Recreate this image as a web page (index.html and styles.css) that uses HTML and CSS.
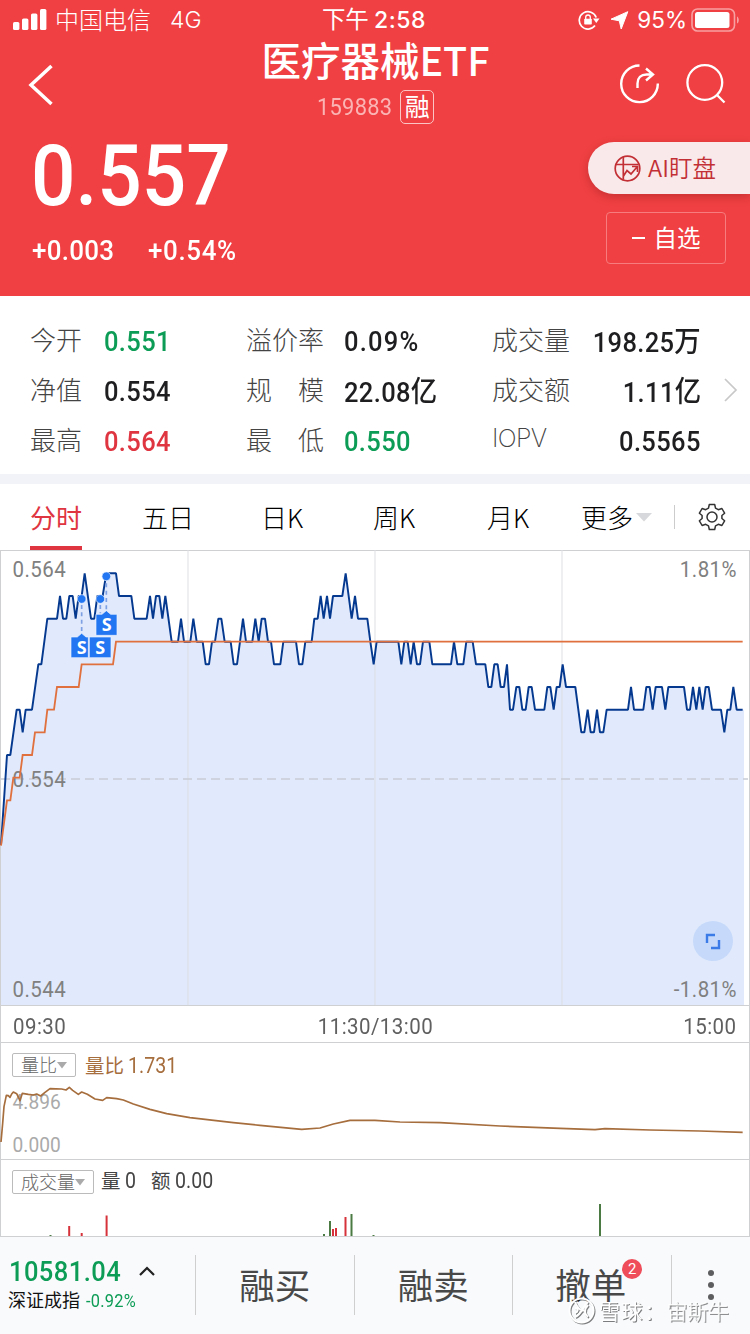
FILE: index.html
```html
<!DOCTYPE html>
<html lang="zh-CN">
<head>
<meta charset="utf-8">
<title>医疗器械ETF</title>
<link rel="stylesheet" href="styles.css">
</head>
<body>
<div class="screen">
  <header class="head">
    <div class="status">
      <div class="carrier">
        <svg width="34" height="22" viewBox="0 0 34 22" fill="#fff"><rect x="0" y="13" width="6.4" height="8" rx="1.6"/><rect x="9" y="9.5" width="6.4" height="11.5" rx="1.6"/><rect x="18" y="4.500" width="6.4" height="16.500" rx="1.600"/><rect x="27" y="0" width="6.400" height="21" rx="1.600"/></svg>
        <span class="carrier-name">中国电信</span><span class="network">4G</span>
      </div>
      <div class="clock"><span>下午</span><b>2:58</b></div>
      <div class="system">
        <svg class="lock" width="22" height="20" viewBox="0 0 22 20"><path d="M17 15.500A8.700 8.700 0 1 1 18.200 7.500" fill="none" stroke="#fff" stroke-width="1.700"/><path d="M15 8.500h6.500l-3.200 4.500z" fill="#fff"/><rect x="6.200" y="8.700" width="7.600" height="5.900" rx=".8" fill="#fff"/><path d="M7.700 9V7.300a2.300 2.300 0 0 1 4.600 0V9" fill="none" stroke="#fff" stroke-width="1.300"/></svg>
        <svg class="locate" width="19" height="19" viewBox="0 0 19 19"><path d="M17.800.7 11.200 18 9.300 9.800 1 8.200z" fill="#fff" stroke="#fff" stroke-width="1" stroke-linejoin="round"/></svg>
        <span class="percent">95%</span>
        <svg class="battery" width="49" height="24" viewBox="0 0 49 24"><rect x="1" y="1" width="42.500" height="22" rx="5.500" fill="none" stroke="#fff" stroke-opacity=".5" stroke-width="1.600"/><rect x="4" y="4" width="34.500" height="16" rx="2.500" fill="#fff"/><path d="M46 8.500c2.400 1 2.400 6 0 7z" fill="#fff" fill-opacity=".5"/></svg>
      </div>
    </div>
    <nav class="nav">
      <svg class="back" width="26" height="42" viewBox="0 0 26 42"><path d="M23.500 2 3 21l20.500 19" fill="none" stroke="#fff" stroke-width="3.500"/></svg>
      <div class="titles">
        <h1>医疗器械ETF</h1>
        <div class="code"><span class="num">159883</span><i>融</i></div>
      </div>
      <div class="tools">
        <svg width="40" height="42" viewBox="0 0 40 42" fill="none" stroke="#fff" stroke-width="2.400"><path d="M20.500 2.500a18.300 18.300 0 1 0 18.300 18"/><path d="M18.500 25v-4.500c0-5.500 3.500-9 9-9h6M27 5.500l7 6-7 6"/></svg>
        <svg width="40" height="42" viewBox="0 0 40 42" fill="none" stroke="#fff" stroke-width="2.300"><circle cx="18.800" cy="19.500" r="17.400"/><path d="m31 32 7.500 7.500"/></svg>
      </div>
    </nav>
    <div class="quote">
      <div class="quote-main">
        <div class="price num">0.557</div>
        <div class="change"><span class="num">+0.003</span><span class="num">+0.54%</span></div>
      </div>
      <div class="quote-actions">
        <div class="watch">
          <svg width="27" height="27" viewBox="0 0 27 27" fill="none" stroke="#c23035" stroke-width="1.700"><circle cx="13.500" cy="13.500" r="12.300"/><path d="M2 9.500h22.500M9.300 2v22.500M9.500 21l3.500-5.500 4 3.500 6-7M18 11.500h5.500V17"/></svg>
          <span>AI盯盘</span>
        </div>
        <div class="favorite"><span class="minus"></span><span>自选</span></div>
      </div>
    </div>
  </header>

  <section class="stats">
    <div class="labels"><span>今开</span><span>净值</span><span>最高</span></div>
    <div class="values"><span class="num down">0.551</span><span class="num">0.554</span><span class="num up">0.564</span></div>
    <div class="labels"><span>溢价率</span><span class="spread"><em>规</em><em>模</em></span><span class="spread"><em>最</em><em>低</em></span></div>
    <div class="values"><span class="num pct">0.09%</span><span class="num">22.08<u>亿</u></span><span class="num down">0.550</span></div>
    <div class="labels"><span>成交量</span><span>成交额</span><span class="latin">IOPV</span></div>
    <div class="values end"><span class="num">198.25<u>万</u></span><span class="num">1.11<u>亿</u></span><span class="num">0.5565</span></div>
    <svg class="more" width="16" height="26" viewBox="0 0 16 26"><path d="m2 2 11 11L2 24" fill="none" stroke="#c8c8c8" stroke-width="1.700"/></svg>
  </section>

  <nav class="tabs">
    <span class="tab active">分时</span><span class="tab">五日</span><span class="tab">日K</span><span class="tab">周K</span><span class="tab">月K</span>
    <span class="tab">更多<svg width="16" height="9" viewBox="0 0 16 9"><path d="M0 0h16L8 8.500z" fill="#d6d8db"/></svg></span>
    <span class="bar"></span>
    <svg class="gear" width="28" height="28" viewBox="0 0 28 28" fill="none" stroke="#333" stroke-width="1.500" stroke-linejoin="round"><path d="M11.300 1.500h5.400l.8 3.600 2.800 1.600 3.600-1.200 2.700 4.700-2.700 2.300v3l2.700 2.300-2.700 4.700-3.600-1.200-2.800 1.600-.8 3.600h-5.400l-.8-3.600-2.800-1.600-3.600 1.200-2.700-4.700 2.700-2.300v-3l-2.700-2.300 2.700-4.700 3.600 1.200 2.800-1.600z"/><circle cx="14" cy="14" r="5"/></svg>
  </nav>

  <section class="price-chart">
    <svg width="750" height="455" viewBox="0 0 750 455">
      <g transform="scale(.33333)">
        <path fill="#e0eafc" d="M3 885L21 615H31L50 479H59L68 547L77 479H96L115 343H124L142 206H171L180 138L189 206H199L208 138H218L227 206L236 138H245L254 70L273 206H283L292 138H308L319 70H348L357 138H394L403 206H440L450 138L459 206L468 138H478L487 206L496 138L515 275H534L543 206L552 275H571L580 206L590 275H608L617 343H627L636 275H645L655 206H664L674 275H692L701 343H711L720 275L729 206L738 275H757L766 206L776 275L785 206H795L804 275H813L822 343H841L850 275H888L897 343H907L916 275H935L943 206H953L962 138L971 206L981 138L990 206L999 138H1027L1037 70L1055 206L1065 138L1074 206H1102L1111 275L1121 343L1130 275H1195L1204 343L1213 275H1223L1232 343L1241 275L1251 343H1260L1269 275H1288L1297 343H1353L1362 275L1372 343H1390L1399 275H1418L1428 343H1456L1465 411H1474L1483 343H1493L1502 411H1512L1521 343L1530 479H1539L1549 411H1558L1567 479H1577L1586 411H1595L1605 479H1633L1642 411H1651L1661 479L1670 411H1679L1688 343L1698 411H1726L1744 547H1753L1763 479L1772 547H1782L1791 479L1800 547H1810L1820 479H1884L1893 411L1902 479H1930L1939 411H1949L1958 479L1967 411H1986L1996 479L2005 411H2052L2061 479H2070L2079 411L2089 479L2098 411L2108 479L2117 411H2126L2136 479H2163L2173 547L2182 479H2191L2200 411L2210 479H2232V1365H3Z"/>
      </g>
      <path d="M188 0V455M375 0V455M562 0V455" stroke="#dedfe3" stroke-opacity=".75" stroke-width="1.300"/>
      <path d="M1 229H748" stroke="#c9ccd5" stroke-width="1.500" stroke-dasharray="9 5"/>
      <g class="axis">
        <text transform="translate(12.500 27) scale(.91 1)">0.564</text><text transform="translate(12.500 237) scale(.91 1)">0.554</text><text transform="translate(12.500 447) scale(.91 1)">0.544</text>
        <text class="right" transform="translate(737 27) scale(.91 1)">1.81%</text><text class="right" transform="translate(737 447) scale(.91 1)">-1.81%</text>
      </g>
      <g transform="scale(.33333)" fill="none">
        <path stroke="#05398f" stroke-width="5.800" stroke-linejoin="bevel" d="M3 885L21 615H31L50 479H59L68 547L77 479H96L115 343H124L142 206H171L180 138L189 206H199L208 138H218L227 206L236 138H245L254 70L273 206H283L292 138H308L319 70H348L357 138H394L403 206H440L450 138L459 206L468 138H478L487 206L496 138L515 275H534L543 206L552 275H571L580 206L590 275H608L617 343H627L636 275H645L655 206H664L674 275H692L701 343H711L720 275L729 206L738 275H757L766 206L776 275L785 206H795L804 275H813L822 343H841L850 275H888L897 343H907L916 275H935L943 206H953L962 138L971 206L981 138L990 206L999 138H1027L1037 70L1055 206L1065 138L1074 206H1102L1111 275L1121 343L1130 275H1195L1204 343L1213 275H1223L1232 343L1241 275L1251 343H1260L1269 275H1288L1297 343H1353L1362 275L1372 343H1390L1399 275H1418L1428 343H1456L1465 411H1474L1483 343H1493L1502 411H1512L1521 343L1530 479H1539L1549 411H1558L1567 479H1577L1586 411H1595L1605 479H1633L1642 411H1651L1661 479L1670 411H1679L1688 343L1698 411H1726L1744 547H1753L1763 479L1772 547H1782L1791 479L1800 547H1810L1820 479H1884L1893 411L1902 479H1930L1939 411H1949L1958 479L1967 411H1986L1996 479L2005 411H2052L2061 479H2070L2079 411L2089 479L2098 411L2108 479L2117 411H2126L2136 479H2163L2173 547L2182 479H2191L2200 411L2210 479H2228"/>
        <path stroke="#e0713f" stroke-width="5.500" d="M3 887L21 751H31L40 683H59L68 615H96L105 547H134L142 479H162L171 411H236L245 343H339L348 275H2228"/>
        <path stroke="#7d9fe3" stroke-width="5" stroke-dasharray="12 10" d="M245 165V250M301 165V190M319 100V180"/>
        <g fill="#2276f2" stroke="#eef4ff" stroke-width="2">
          <circle cx="245" cy="147" r="13"/><circle cx="301" cy="147" r="13"/><circle cx="319" cy="79" r="13"/>
          <path d="M213 261H232L245 250L258 261H265V323H213ZM268 261H333V323H268ZM288 193H306L319 182L332 193H351V256H288Z"/>
        </g>
      </g>
      <g class="mark"><text x="81.800" y="104">S</text><text x="100.200" y="104">S</text><text x="106.600" y="81">S</text></g>
      <circle cx="713" cy="391" r="20" fill="#c6d9fa"/>
      <path d="M707 393v-8h8M719 390v8h-8" fill="none" stroke="#3a7be8" stroke-width="2.400"/>
    </svg>
  </section>

  <div class="times"><span class="num">09:30</span><span class="num">11:30/13:00</span><span class="num">15:00</span></div>

  <section class="ratio">
    <div class="picker"><span class="select">量比<svg width="10" height="7" viewBox="0 0 10 7"><path d="M0 0h10L5 6.500z" fill="#aaa"/></svg></span><span class="reading brown">量比 <span class="num">1.731</span></span></div>
    <svg class="plot" width="750" height="81" viewBox="0 36 750 81">
      <g class="axis faint"><text transform="translate(12.500 66.500) scale(.91 1)">4.896</text><text transform="translate(12.500 110) scale(.91 1)">0.000</text></g>
      <g transform="scale(.33333) translate(0 -216)"><path fill="none" stroke="#a66d3d" stroke-width="5" stroke-linejoin="round" d="M3 516L8 460L12 410L19 376L25 377L30 382L35 372L40 366L50 371L60 392L67 370L85 373L100 375L110 372L122 378L135 367L150 356L185 357L198 360L208 352L218 361L235 373L245 366L262 373L285 387L308 391L320 383L350 386L370 390L400 402L450 418L500 431L570 443L700 458L780 466L905 478L960 474L1000 462L1050 451L1125 451L1200 456L1320 458L1500 468L1680 475L1785 479L1815 476L1950 480L2100 483L2228 487"/></g>
    </svg>
  </section>

  <section class="volume">
    <div class="picker"><span class="select wide">成交量<svg width="10" height="7" viewBox="0 0 10 7"><path d="M0 0h10L5 6.500z" fill="#aaa"/></svg></span><span class="reading">量 <span class="num">0</span></span><span class="reading amount">额 <span class="num">0.00</span></span></div>
    <svg class="plot" width="750" height="41" viewBox="0 36 750 41" stroke-width="2"><path stroke="#d6323b" d="M69.200 67V77M81.700 74V77M106.600 56.500V77M333 70V77M336 69V77M345.500 58V77"/><path stroke="#4b7a43" d="M50.500 76V77M324 75V77M330 62V77M351.500 55V77M373.500 76V77M600 45V77"/></svg>
  </section>

  <footer class="bottom">
    <div class="index">
      <div class="index-top"><span class="num">10581.04</span><svg width="16" height="10" viewBox="0 0 16 10"><path d="m1 9 7-7 7 7" fill="none" stroke="#222" stroke-width="2.200"/></svg></div>
      <div class="index-name">深证成指<span class="num">-0.92%</span></div>
    </div>
    <div class="action">融买</div>
    <div class="action">融卖</div>
    <div class="action"><span class="cancel">撤单<b>2</b></span></div>
    <div class="dots"><i></i><i></i><i></i></div>
  </footer>
  <div class="watermark"><svg width="27" height="27" viewBox="0 0 27 27" fill="none" stroke="#fff" stroke-width="2"><circle cx="13.500" cy="13.500" r="12"/><path d="M7 5c2 5 4 8.500 9 8.500M20 5c-5 4-6 12-13 15M7 11c4 1 3 4 0 5M20 8c-5 5-3 10 0 12"/></svg><span>雪球：</span><span class="author">宙斯牛</span></div>
</div>
</body>
</html>
```

FILE: styles.css
```css
* { box-sizing: border-box; }
body { margin: 0; background: #fff; font-family: "Noto Sans CJK SC", sans-serif; }
svg { display: block; flex: none; }
i, em { font-style: normal; }
u { text-decoration: none; }
.screen { position: relative; width: 750px; height: 1334px; overflow: hidden; display: flex; flex-direction: column; white-space: nowrap; }
.num { display: inline-block; font-family: Roboto, "Noto Sans CJK SC", sans-serif; transform: scaleX(.91); transform-origin: left center; letter-spacing: .3px; }

/* Header */
.head { flex: none; height: 296px; background: #f04043; color: #fff; }
.status { height: 40px; display: grid; grid-template-columns: 1fr auto 1fr; align-items: center; padding: 0 11px 0 13px; font-size: 24px; line-height: 40px; font-weight: 300; }
.carrier, .system { display: flex; align-items: center; }
.carrier-name { margin: -3px 0 0 8px; }
.network { margin-left: 19px; font-family: Inter, sans-serif; font-size: 23px; }
.clock { display: flex; margin-left: -4px; font-weight: 400; font-size: 23.500px; }
.clock span { margin-top: -2px; }
.clock b { font: 500 23px/40px Inter, sans-serif; letter-spacing: .6px; margin-left: 5px; }
.system { justify-content: flex-end; margin-right: -1px; }
.locate { margin-left: 10px; }
.percent { font: 400 22.500px/40px Inter, sans-serif; margin: 0 4px 0 8px; }
.nav { height: 90px; display: grid; grid-template-columns: 200px 1fr 200px; padding: 0 24px 0 28px; }
.back { margin-top: 24px; }
.titles { text-align: center; margin-left: -3px; }
h1 { margin: -4px 0 0; font-size: 39.500px; line-height: 46px; font-weight: 500; }
.code { height: 36px; margin-top: 7px; display: flex; justify-content: center; align-items: center; font-size: 24px; color: #fbb4b4; }
.code .num { margin-right: 1px; }
.code i { width: 34px; height: 34px; border: 1.500px solid #fbc5c5; border-radius: 5px; color: #fff; font-size: 25px; line-height: 29px; }
.tools { display: flex; justify-content: flex-end; gap: 27px; margin-top: 23px; }
.quote { display: flex; justify-content: space-between; }
.quote-main { padding-left: 31px; }
.price { font-size: 86px; line-height: 92px; font-weight: 500; letter-spacing: 0; display: block; }
.change { margin-top: 12px; padding-left: 1px; display: flex; gap: 26px; font-size: 28.500px; line-height: 34px; font-weight: 500; }
.change .num:last-child { letter-spacing: .7px; }
.quote-actions { padding-top: 12px; display: flex; flex-direction: column; align-items: flex-end; gap: 18px; }
.watch { width: 162px; height: 52px; padding-left: 26px; display: flex; align-items: center; gap: 7px; border-radius: 26px 0 0 26px; background: #fae9ea; color: #c23035; font-size: 23.500px; font-weight: 350; box-shadow: 0 3px 9px rgba(150, 30, 30, .45); }
.watch span, .favorite span:last-child { margin-top: -2px; }
.favorite { width: 120px; height: 52px; margin-right: 24px; border: 1px solid #f77c7e; border-radius: 4px; display: flex; align-items: center; justify-content: center; gap: 9px; font-size: 23.500px; }
.minus { width: 13px; height: 1.500px; background: #fff; }

/* Statistics */
.stats { flex: none; height: 188px; border-bottom: 10px solid #f1f3f8; display: grid; grid-template-columns: 74px 142px 98px 148px 77px 132px 1fr; padding: 18px 0 0 30px; line-height: 50px; font-size: 26px; }
.labels, .values { display: flex; flex-direction: column; }
.labels { color: #444; font-weight: 300; }
.labels span { height: 50px; }
.labels .latin { margin-top: -1px; font-family: Inter, sans-serif; font-size: 25px; letter-spacing: -.6px; font-weight: 200; }
.spread { width: 78px; display: flex; justify-content: space-between; }
.values { font-size: 28px; font-weight: 500; color: #1e1e20; padding-top: 3px; align-items: flex-start; }
.values .num { height: 50px; letter-spacing: .4px; }
.values .pct { letter-spacing: 1.400px; }
.values u { font-size: 29px; letter-spacing: 0; }
.end { align-items: flex-end; }
.end .num { transform-origin: right center; }
.up { color: #df3541; }
.down { color: #0d9c55; }
.more { margin: 63px 0 0 22px; }

/* Tabs */
.tabs { flex: none; height: 66px; display: flex; padding: 0 24px 0 30px; font-size: 26px; line-height: 66px; color: #000; font-weight: 300; }
.tab { height: 66px; display: flex; align-items: center; margin-right: 60px; }
.tab:nth-child(2) { margin-right: 68px; width: 51px; }
.tab:nth-child(3), .tab:nth-child(4), .tab:nth-child(5) { width: 42px; margin-right: 70px; }
.tab:nth-child(4) { margin-right: 72px; }
.tab:nth-child(5) { margin-right: 52px; }
.tab:nth-child(6) { margin-right: 22px; gap: 3px; }
.active { color: #df3541; font-weight: 400; border-bottom: 4px solid #df3541; padding-top: 3px; }
.bar { width: 1px; height: 24px; margin-top: 21px; background: #ccc; }
.gear { margin: 19px 0 0 23px; }

/* Charts */
.price-chart { flex: none; height: 455px; border: 1px solid #cfd0d2; border-width: 1px 1px 0; }
.price-chart svg { margin: -1px 0 0 -1px; }
.axis { font: 22.500px Roboto, sans-serif; letter-spacing: .5px; fill: #808080; }
.right { text-anchor: end; }
.faint { font-size: 21px; letter-spacing: .1px; fill: #aaa; }
.mark { font: 700 18px "Noto Sans", sans-serif; fill: #fff; text-anchor: middle; }
.times { flex: none; height: 37px; border: 1px solid #cfd0d2; border-width: 1px 1px 0; display: flex; justify-content: space-between; padding: 2px 12px 0; font-size: 22.500px; line-height: 36px; color: #606060; }
.times .num { letter-spacing: .5px; }
.times .num:nth-child(2) { transform-origin: center; }
.times .num:last-child { transform-origin: right center; }
.ratio { flex: none; height: 117px; border: 1px solid #cfd0d2; border-width: 1px 1px 0; }
.volume { flex: none; height: 77px; border: 1px solid #cfd0d2; border-width: 1px 1px 0; }
.plot { margin-left: -1px; }
.picker { height: 35px; padding: 10px 0 0 11px; display: flex; align-items: flex-start; font-size: 19.500px; color: #444; }
.select { width: 64px; height: 24px; border: 1px solid #bbb; border-radius: 2px; display: flex; align-items: center; justify-content: center; font-size: 18px; line-height: 20px; padding-bottom: 2px; font-weight: 300; color: #666; }
.select svg { margin-top: 3px; }
.wide { width: 82px; }
.reading { line-height: 24px; margin: 0 0 0 9px; }
.reading .num { font-size: 21.500px; letter-spacing: 0; }
.wide + .reading { margin-left: 7px; }
.volume .reading { margin-top: -2px; }
.reading.amount { margin-left: 14px; }
.brown { color: #a66d3d; }

/* Bottom bar */
.bottom { flex: none; height: 98px; background: #f8fafc; border-top: 1px solid #cfd0d2; display: flex; padding-top: 18px; }
.index { width: 195px; padding-left: 8px; }
.index-top { height: 32px; display: flex; align-items: center; font-size: 28px; font-weight: 500; color: #0d9c55; }
.index-top .num { width: 131px; margin-left: 1px; margin-right: -1px; letter-spacing: .5px; }
.index-name { font-size: 18px; line-height: 24px; color: #111; }
.index-name .num { margin-left: 6px; color: #0d9c55; font-size: 18px; }
.action { width: 158.500px; height: 60px; border-left: 1px solid #cfcfcf; display: flex; align-items: center; justify-content: center; font-size: 35.500px; line-height: 56px; padding-bottom: 2px; color: #484848; }
.cancel { position: relative; left: -1px; }
.cancel b { position: absolute; left: 67px; top: 3px; width: 20px; height: 20px; border-radius: 50%; background: #ee4d59; color: #fff; font: 15px/20px Roboto, sans-serif; text-align: center; }
.dots { flex: 1; height: 60px; border-left: 1px solid #cfcfcf; display: flex; flex-direction: column; align-items: center; gap: 6px; padding-top: 15px; }
.dots i { width: 6px; height: 6px; border-radius: 50%; background: #5d5d60; }
.watermark { position: absolute; left: 568px; top: 1297px; display: flex; align-items: center; color: #fff; font-size: 21px; line-height: 28px; font-weight: 400; filter: drop-shadow(1px 1px .5px rgba(0, 0, 0, .5)); }
.watermark span { margin: -1px 0 0 4px; letter-spacing: 1.500px; }
.watermark .author { margin-left: 0; letter-spacing: -.3px; opacity: .85; }
```
